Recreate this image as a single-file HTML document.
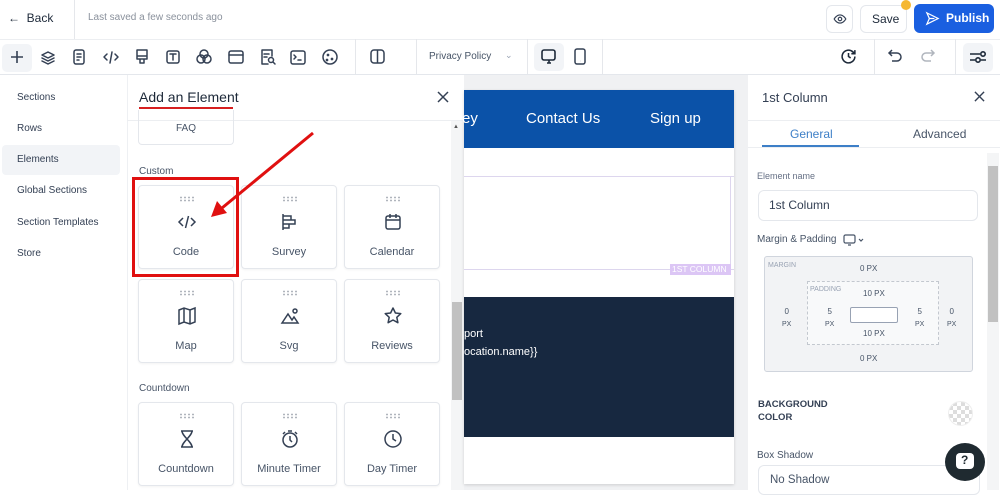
<!DOCTYPE html>
<html><head><meta charset="utf-8"><style>
*{box-sizing:border-box;margin:0;padding:0}
body{width:1000px;height:490px;overflow:hidden;font-family:"Liberation Sans",sans-serif;background:#fff;position:relative;color:#344054}
.a{position:absolute}
.t{position:absolute;white-space:nowrap}
svg{overflow:visible}
.card{position:absolute;width:96px;height:84px;border:1px solid #e4e7ec;border-radius:4px;background:#fff;box-shadow:0 1px 2px rgba(0,0,0,.05)}
.card .dots{position:absolute;left:40px;top:10px;width:16px;height:6px;background-image:radial-gradient(circle,#b0b5bd 0.8px,transparent 1px);background-size:4px 3px}
.card .lab{position:absolute;left:0;right:0;top:60px;text-align:center;font-size:11px;color:#475467}
.card svg{position:absolute;left:38px;top:26px;width:20px;height:20px}
.sep{position:absolute;width:1px;background:#e5e7eb}
</style></head><body>
<div class="t" style="left:8px;top:11px;font-size:12px;color:#1d2939">&#8592;&nbsp;&nbsp;Back</div>
<div class="sep" style="left:74px;top:0;height:39px"></div>
<div class="t" style="left:88px;top:12px;font-size:10px;color:#8a919c">Last saved a few seconds ago</div>
<div class="a" style="left:826px;top:5px;width:27px;height:28px;border:1px solid #e4e7ec;border-radius:6px"></div>
<svg class="a" style="left:833px;top:12px" width="14" height="14" viewBox="0 0 24 24" fill="none" stroke="#344054" stroke-width="2"><path d="M2 12s4-7 10-7 10 7 10 7-4 7-10 7S2 12 2 12z"/><circle cx="12" cy="12" r="3"/></svg>
<div class="a" style="left:860px;top:5px;width:47px;height:28px;border:1px solid #e4e7ec;border-radius:6px"></div>
<div class="t" style="left:872px;top:12px;font-size:12px;color:#1d2939">Save</div>
<div class="a" style="left:901px;top:0px;width:10px;height:10px;border-radius:50%;background:#f5b731"></div>
<div class="a" style="left:914px;top:4px;width:80px;height:29px;border-radius:6px;background:#1a5fe0"></div>
<svg class="a" style="left:925px;top:11px" width="15" height="15" viewBox="0 0 24 24" fill="none" stroke="#fff" stroke-width="2"><path d="M3 3l18 9-18 9 4-9z M7 12h8"/></svg>
<div class="t" style="left:946px;top:11px;font-size:12px;color:#fff;font-weight:bold">Publish</div>
<div class="a" style="left:0;top:39px;width:1000px;height:1px;background:#eceef1"></div>
<div class="a" style="left:2px;top:44px;width:30px;height:28px;border-radius:5px;background:#f2f4f7"></div>
<svg class="a" style="left:10px;top:50px" width="14" height="14" viewBox="0 0 14 14" stroke="#344054" stroke-width="1.6"><path d="M7 1v12M1 7h12"/></svg>
<svg class="a" style="left:0;top:48px" width="350" height="20" viewBox="0 0 350 20" fill="none" stroke="#344054" stroke-width="1.5" stroke-linecap="round" stroke-linejoin="round">
<path d="M48 4l6 3-6 3-6-3z M42 10l6 3 6-3 M42 13l6 3 6-3"/>
<rect x="74" y="2" width="10" height="14" rx="2"/><path d="M77 6h4 M77 9h4 M77 12h2"/>
<path d="M107 6l-3 3 3 3 M115 6l3 3-3 3 M112 4l-2 11"/>
<path d="M137 2h10v6h-10z M137 8h10v3h-10z M140 11v4h4v-4"/>
<rect x="167" y="3" width="12" height="12" rx="2"/><path d="M170 6h6 M173 6v6"/>
<circle cx="204" cy="6" r="4"/><circle cx="201" cy="11" r="4"/><circle cx="207" cy="11" r="4"/>
<rect x="229" y="3" width="14" height="12" rx="2"/><path d="M229 7h14"/>
<path d="M268 16h-6v-14h10v6 M264 6h5 M264 9h3"/><circle cx="271" cy="12" r="2.5"/><path d="M273 14l2 2"/>
<rect x="291" y="3" width="14" height="13" rx="2"/><path d="M294 7l2 2-2 2 M298 12h3"/>
<circle cx="330" cy="9" r="7"/><circle cx="328" cy="7" r="0.6"/><circle cx="332" cy="11" r="0.6"/><circle cx="327" cy="12" r="0.6"/>
</svg>
<div class="sep" style="left:355px;top:39px;height:35px"></div>
<svg class="a" style="left:370px;top:49px" width="16" height="16" viewBox="0 0 16 16" fill="none" stroke="#344054" stroke-width="1.5"><rect x="1" y="1" width="13" height="13" rx="3"/><path d="M7.5 1v13"/></svg>
<div class="sep" style="left:416px;top:39px;height:35px"></div>
<div class="t" style="left:429px;top:51px;font-size:10px;color:#475467">Privacy Policy</div>
<div class="t" style="left:505px;top:50px;font-size:9px;color:#98a2b3">&#8964;</div>
<div class="sep" style="left:527px;top:39px;height:35px"></div>
<div class="a" style="left:534px;top:43px;width:30px;height:28px;border-radius:5px;background:#f2f4f7"></div>
<svg class="a" style="left:540px;top:49px" width="18" height="16" viewBox="0 0 18 16" fill="none" stroke="#1d2939" stroke-width="1.6"><rect x="2" y="1" width="13" height="10" rx="2"/><path d="M7 14h4 M9 11v3"/></svg>
<svg class="a" style="left:574px;top:48px" width="12" height="17" viewBox="0 0 12 17" fill="none" stroke="#344054" stroke-width="1.5"><rect x="1" y="1" width="10" height="15" rx="2"/><path d="M6 13h.1"/></svg>
<div class="sep" style="left:602px;top:39px;height:35px"></div>
<svg class="a" style="left:840px;top:48px" width="17" height="17" viewBox="0 0 24 24" fill="none" stroke="#1d2939" stroke-width="2.2"><path d="M21 12a9 9 0 1 1-3-6.7L21 8 M21 3v5h-5 M12 7v5l3 2"/></svg>
<div class="sep" style="left:874px;top:39px;height:35px"></div>
<svg class="a" style="left:888px;top:49px" width="15" height="14" viewBox="0 0 15 14" fill="none" stroke="#344054" stroke-width="1.5"><path d="M4 1L1 4l3 3 M1 4h8a4 4 0 0 1 0 8H4"/></svg>
<svg class="a" style="left:920px;top:49px" width="15" height="14" viewBox="0 0 15 14" fill="none" stroke="#b0b5bd" stroke-width="1.5"><path d="M11 1l3 3-3 3 M14 4H6a4 4 0 0 0 0 8h5"/></svg>
<div class="sep" style="left:955px;top:39px;height:35px"></div>
<div class="a" style="left:963px;top:43px;width:30px;height:29px;border-radius:5px;background:#f2f4f7"></div>
<svg class="a" style="left:969px;top:50px" width="18" height="14" viewBox="0 0 18 14" fill="none" stroke="#1d2939" stroke-width="1.6"><path d="M1 4h10 M1 10h5 M12 10h5"/><circle cx="14" cy="4" r="2.2"/><circle cx="9" cy="10" r="2.2"/></svg>
<div class="a" style="left:0;top:74px;width:1000px;height:1px;background:#e4e7ec"></div>
<div class="a" style="left:2px;top:145px;width:118px;height:30px;border-radius:4px;background:#f2f4f7"></div>
<div class="t" style="left:17px;top:92px;font-size:10px;color:#344054">Sections</div>
<div class="t" style="left:17px;top:123px;font-size:10px;color:#344054">Rows</div>
<div class="t" style="left:17px;top:154px;font-size:10px;color:#344054">Elements</div>
<div class="t" style="left:17px;top:185px;font-size:10px;color:#344054">Global Sections</div>
<div class="t" style="left:17px;top:217px;font-size:10px;color:#344054">Section Templates</div>
<div class="t" style="left:17px;top:248px;font-size:10px;color:#344054">Store</div>
<div class="a" style="left:127px;top:75px;width:337px;height:415px;background:#fff;border-left:1px solid #eef0f3"></div>
<div class="t" style="left:139px;top:89px;font-size:14px;color:#1d2939">Add an Element</div>
<div class="a" style="left:139px;top:107px;width:94px;height:2px;background:#d61f1f"></div>
<svg class="a" style="left:437px;top:91px" width="12" height="12" viewBox="0 0 12 12" stroke="#344054" stroke-width="1.5"><path d="M1 1l10 10M11 1L1 11"/></svg>
<div class="a" style="left:127px;top:120px;width:337px;height:1px;background:#eceef1"></div>
<div class="a" style="left:138px;top:110px;width:96px;height:35px;border:1px solid #e4e7ec;border-top:none;border-radius:0 0 4px 4px"></div>
<div class="t" style="left:176px;top:123px;font-size:10px;color:#475467">FAQ</div>
<div class="t" style="left:139px;top:166px;font-size:10px;color:#475467">Custom</div>
<div class="t" style="left:139px;top:383px;font-size:10px;color:#475467">Countdown</div>
<div class="card" style="left:138px;top:185px"><div class="dots"></div><svg viewBox="0 0 20 20" fill="none" stroke="#344054" stroke-width="1.5"><path d="M6 6l-4 4 4 4 M14 6l4 4-4 4 M11.5 4l-3 12"/></svg><div class="lab">Code</div></div>
<div class="card" style="left:241px;top:185px"><div class="dots"></div><svg viewBox="0 0 20 20" fill="none" stroke="#344054" stroke-width="1.5"><path d="M3 2v16 M3 4h8v4H3 M3 8h12v4H3 M3 12h6v4H3"/></svg><div class="lab">Survey</div></div>
<div class="card" style="left:344px;top:185px"><div class="dots"></div><svg viewBox="0 0 20 20" fill="none" stroke="#344054" stroke-width="1.5"><rect x="3" y="4" width="14" height="13" rx="2"/><path d="M3 8h14 M7 2v4 M13 2v4"/></svg><div class="lab">Calendar</div></div>
<div class="card" style="left:138px;top:279px"><div class="dots"></div><svg viewBox="0 0 20 20" fill="none" stroke="#344054" stroke-width="1.5"><path d="M2 4l5-2 6 2 5-2v14l-5 2-6-2-5 2z M7 2v14 M13 4v14"/></svg><div class="lab">Map</div></div>
<div class="card" style="left:241px;top:279px"><div class="dots"></div><svg viewBox="0 0 20 20" fill="none" stroke="#344054" stroke-width="1.5"><path d="M2 17l6-9 4 6 2-3 4 6z"/><circle cx="15" cy="5" r="2"/></svg><div class="lab">Svg</div></div>
<div class="card" style="left:344px;top:279px"><div class="dots"></div><svg viewBox="0 0 20 20" fill="none" stroke="#344054" stroke-width="1.5" stroke-linejoin="round"><path d="M10 2l2.4 5 5.4.6-4 3.7 1.1 5.4L10 14l-4.9 2.7 1.1-5.4-4-3.7 5.4-.6z"/></svg><div class="lab">Reviews</div></div>
<div class="card" style="left:138px;top:402px"><div class="dots"></div><svg viewBox="0 0 20 20" fill="none" stroke="#344054" stroke-width="1.5"><path d="M4 2h12 M4 18h12 M5 2c0 5 10 11 10 16 M15 2c0 5-10 11-10 16"/></svg><div class="lab">Countdown</div></div>
<div class="card" style="left:241px;top:402px"><div class="dots"></div><svg viewBox="0 0 20 20" fill="none" stroke="#344054" stroke-width="1.5"><circle cx="10" cy="11" r="7"/><path d="M8 2h4 M10 7v4l2 2 M3 5l2-2 M17 5l-2-2"/></svg><div class="lab">Minute Timer</div></div>
<div class="card" style="left:344px;top:402px"><div class="dots"></div><svg viewBox="0 0 20 20" fill="none" stroke="#344054" stroke-width="1.5"><circle cx="10" cy="10" r="8"/><path d="M10 5v5l3 2"/></svg><div class="lab">Day Timer</div></div>
<div class="a" style="left:132px;top:177px;width:107px;height:100px;border:3px solid #e01010"></div>
<svg class="a" style="left:0;top:0" width="1000" height="490"><path d="M313 133L222 208" stroke="#e01010" stroke-width="3"/><path d="M211 217l6-16 10 12z" fill="#e01010"/></svg>
<div class="a" style="left:451px;top:121px;width:13px;height:369px;background:#f4f5f6"></div>
<div class="a" style="left:452px;top:302px;width:10px;height:98px;background:#c1c1c1"></div>
<div class="t" style="left:453px;top:124px;font-size:6px;color:#555">&#9650;</div>
<div class="a" style="left:464px;top:75px;width:284px;height:415px;background:#f0f1f3"></div>
<div class="a" style="left:464px;top:90px;width:270px;height:394px;background:#fff;box-shadow:0 1px 3px rgba(0,0,0,.15)"></div>
<div class="a" style="left:464px;top:90px;width:270px;height:58px;background:#0b52a8"></div>
<div class="t" style="left:462px;top:110px;font-size:15px;color:#fff">ey</div>
<div class="t" style="left:526px;top:110px;font-size:15px;color:#fff">Contact Us</div>
<div class="t" style="left:650px;top:110px;font-size:15px;color:#fff">Sign up</div>
<div class="a" style="left:464px;top:176px;width:270px;height:1px;background:#ddd6ee"></div>
<div class="a" style="left:464px;top:269px;width:270px;height:1px;background:#ddd6ee"></div>
<div class="a" style="left:730px;top:176px;width:1px;height:94px;background:#ddd6ee"></div>
<div class="a" style="left:670px;top:264px;width:61px;height:11px;background:#dcc6f5"></div>
<div class="t" style="left:672px;top:264px;font-size:8.5px;color:#fff">1ST COLUMN</div>
<div class="a" style="left:464px;top:297px;width:270px;height:140px;background:#172840"></div>
<div class="t" style="left:464px;top:328px;font-size:11px;color:#fff">port</div>
<div class="t" style="left:464px;top:346px;font-size:11px;color:#fff">ocation.name}}</div>
<div class="a" style="left:748px;top:75px;width:252px;height:415px;background:#fff"></div>
<div class="t" style="left:762px;top:90px;font-size:13px;color:#344054">1st Column</div>
<svg class="a" style="left:974px;top:91px" width="11" height="11" viewBox="0 0 12 12" stroke="#344054" stroke-width="1.5"><path d="M1 1l10 10M11 1L1 11"/></svg>
<div class="a" style="left:748px;top:120px;width:252px;height:1px;background:#eceef1"></div>
<div class="t" style="left:790px;top:127px;font-size:12px;color:#3d7fc7">General</div>
<div class="t" style="left:913px;top:127px;font-size:12px;color:#475467">Advanced</div>
<div class="a" style="left:762px;top:145px;width:97px;height:2px;background:#3d7fc7"></div>
<div class="a" style="left:748px;top:147px;width:252px;height:1px;background:#eceef1"></div>
<div class="a" style="left:987px;top:153px;width:12px;height:337px;background:#f4f5f6"></div>
<div class="a" style="left:988px;top:166px;width:10px;height:156px;background:#c1c1c1"></div>
<div class="t" style="left:757px;top:171px;font-size:9px;color:#667085">Element name</div>
<div class="a" style="left:758px;top:190px;width:220px;height:31px;border:1px solid #e4e7ec;border-radius:6px"></div>
<div class="t" style="left:769px;top:198px;font-size:12px;color:#344054">1st Column</div>
<div class="t" style="left:757px;top:234px;font-size:10px;color:#475467">Margin &amp; Padding</div>
<svg class="a" style="left:843px;top:234px" width="22" height="12" viewBox="0 0 22 12" fill="none" stroke="#475467" stroke-width="1.2"><rect x="1" y="1" width="11" height="8" rx="1.5"/><path d="M5 11h3 M16 5l2 2 2-2"/></svg>
<div class="a" style="left:764px;top:256px;width:209px;height:116px;border:1px solid #d0d5dd;border-radius:3px;background:#f2f3f5"></div>
<div class="t" style="left:768px;top:262px;font-size:7px;color:#98a2b3">MARGIN</div>
<div class="t" style="left:860px;top:264px;font-size:8px;color:#475467">0 PX</div>
<div class="a" style="left:807px;top:281px;width:132px;height:64px;border:1px dashed #c3c8cf;background:#f8f9fa"></div>
<div class="t" style="left:810px;top:286px;font-size:7px;color:#98a2b3">PADDING</div>
<div class="t" style="left:863px;top:289px;font-size:8px;color:#475467">10 PX</div>
<div class="t" style="left:782px;top:306px;font-size:8px;line-height:12px;color:#475467;text-align:center">0<br><span style="font-size:7px">PX</span></div>
<div class="t" style="left:825px;top:306px;font-size:8px;line-height:12px;color:#475467;text-align:center">5<br><span style="font-size:7px">PX</span></div>
<div class="a" style="left:850px;top:307px;width:48px;height:16px;border:1px solid #98a2b3;border-radius:2px;background:#fff"></div>
<div class="t" style="left:915px;top:306px;font-size:8px;line-height:12px;color:#475467;text-align:center">5<br><span style="font-size:7px">PX</span></div>
<div class="t" style="left:947px;top:306px;font-size:8px;line-height:12px;color:#475467;text-align:center">0<br><span style="font-size:7px">PX</span></div>
<div class="t" style="left:863px;top:329px;font-size:8px;color:#475467">10 PX</div>
<div class="t" style="left:860px;top:354px;font-size:8px;color:#475467">0 PX</div>
<div class="t" style="left:758px;top:398px;font-size:9.5px;line-height:13px;font-weight:bold;color:#344054">BACKGROUND<br>COLOR</div>
<div class="a" style="left:948px;top:401px;width:25px;height:25px;border-radius:50%;background-color:#fff;background-image:linear-gradient(45deg,#ddd 25%,transparent 25%,transparent 75%,#ddd 75%),linear-gradient(45deg,#ddd 25%,transparent 25%,transparent 75%,#ddd 75%);background-size:8px 8px;background-position:0 0,4px 4px;border:1px solid #eee"></div>
<div class="t" style="left:757px;top:450px;font-size:10px;color:#475467">Box Shadow</div>
<div class="a" style="left:758px;top:465px;width:222px;height:30px;border:1px solid #e4e7ec;border-radius:6px"></div>
<div class="t" style="left:770px;top:474px;font-size:11.5px;color:#475467">No Shadow</div>
<div class="a" style="left:945px;top:443px;width:40px;height:38px;border-radius:50%;background:#1f2a30"></div>
<div class="a" style="left:956px;top:453px;width:18px;height:16px;border-radius:4px;background:#fff"></div>
<div class="t" style="left:961px;top:453px;font-size:12px;font-weight:bold;color:#1f2a30">?</div>
</body></html>
